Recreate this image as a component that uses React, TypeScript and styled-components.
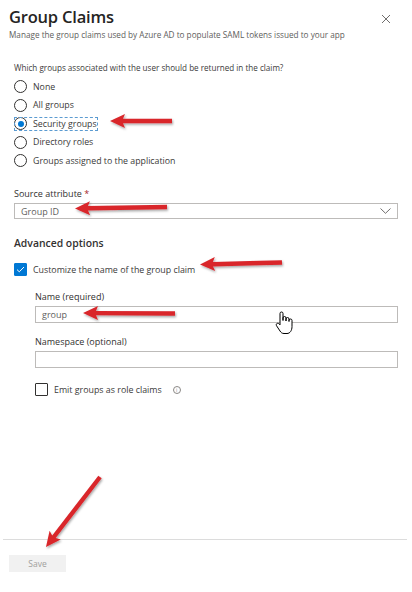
import React from "react";
import styled, { createGlobalStyle } from "styled-components";

const GlobalStyle = createGlobalStyle`
  html, body { margin: 0; padding: 0; background: #fff; }
  body { font-family: "Open Sans", "Noto Sans", sans-serif; color: #323130; }
  * { box-sizing: border-box; }
`;

const Panel = styled.div`
  position: relative;
  width: 412px;
  height: 592px;
  display: flex;
  flex-direction: column;
  background: #fff;
  overflow: hidden;
`;

const Header = styled.header`
  display: flex;
  justify-content: space-between;
  align-items: flex-start;
  padding: 5px 20px 0 9px;
`;

const TitleBlock = styled.div`
  display: flex;
  flex-direction: column;
`;

const Title = styled.h1`
  margin: 0;
  font-size: 16.5px;
  letter-spacing: -0.2px;
  line-height: 24px;
  font-weight: 600;
  color: #252423;
`;

const Subtitle = styled.p`
  margin: 0;
  font-size: 8.2px;
  line-height: 12px;
  color: #605e5c;
`;

const CloseButton = styled.button`
  border: 0;
  background: transparent;
  padding: 0;
  margin-top: 8px;
  width: 12px;
  height: 12px;
  display: flex;
  align-items: center;
  justify-content: center;
`;

const Body = styled.main`
  flex: 1;
  display: flex;
  flex-direction: column;
  padding: 0 14px;
`;

const Question = styled.p`
  margin: 20.5px 0 4px;
  font-size: 8.1px;
  line-height: 12px;
  color: #3b3a39;
`;

const RadioList = styled.div`
  display: flex;
  flex-direction: column;
`;

const RadioRow = styled.label<{ $focused?: boolean }>`
  align-self: flex-start;
  display: flex;
  align-items: center;
  gap: 6px;
  height: 18.5px;
  font-size: 8.8px;
  color: #3b3a39;
  position: relative;
  &::after {
    content: "";
    display: ${(p) => (p.$focused ? "block" : "none")};
    position: absolute;
    left: 0;
    right: -1px;
    top: 2px;
    bottom: 2px;
    border: 1px dashed #5b9bd1;
  }
`;

const RadioCircle = styled.span<{ $checked?: boolean }>`
  width: 13px;
  height: 13px;
  border-radius: 50%;
  border: 1px solid #323130;
  display: flex;
  align-items: center;
  justify-content: center;
  &::before {
    content: "";
    display: ${(p) => (p.$checked ? "block" : "none")};
    width: 6px;
    height: 6px;
    border-radius: 50%;
    background: #0078d4;
  }
`;

const FieldLabel = styled.div<{ $mt: number }>`
  margin-top: ${(p) => p.$mt}px;
  font-size: 9px;
  line-height: 12px;
  color: #323130;
`;

const Required = styled.span`
  color: #a4262c;
`;

const Select = styled.div`
  margin-top: 3px;
  height: 16px;
  border: 1px solid #bdbbb9;
  display: flex;
  align-items: center;
  justify-content: space-between;
  padding: 0 6px;
  font-size: 9px;
  color: #605e5c;
`;

const SectionTitle = styled.h2`
  margin: 16px 0 0;
  font-size: 10.4px;
  line-height: 16px;
  font-weight: 600;
  color: #323130;
`;

const CheckRow = styled.label<{ $mt: number }>`
  display: flex;
  align-items: center;
  gap: 6px;
  margin-top: ${(p) => p.$mt}px;
  font-size: 8.85px;
  color: #3b3a39;
`;

const CheckBox = styled.span<{ $checked?: boolean }>`
  width: 13px;
  height: 13px;
  border-radius: 1px;
  border: 1px solid ${(p) => (p.$checked ? "#0078d4" : "#323130")};
  background: ${(p) => (p.$checked ? "#0078d4" : "#fff")};
  display: flex;
  align-items: center;
  justify-content: center;
`;

const Indented = styled.div`
  display: flex;
  flex-direction: column;
  padding-left: 21px;
`;

const TextInput = styled.div`
  margin-top: 3px;
  height: 17px;
  border: 1px solid #bdbbb9;
  display: flex;
  align-items: center;
  padding: 0 6px;
  font-size: 9px;
  color: #605e5c;
`;

const InfoIcon = styled.span`
  width: 8px;
  height: 8px;
  border-radius: 50%;
  border: 1px solid #8a8886;
  margin-left: 5px;
  font-size: 5px;
  line-height: 6px;
  color: #8a8886;
  display: flex;
  align-items: center;
  justify-content: center;
`;

const Footer = styled.footer`
  display: flex;
  flex-direction: column;
  padding: 0 5px 20px 3px;
`;

const Divider = styled.hr`
  margin: 0;
  border: 0;
  border-top: 1px solid #dcdcdc;
`;

const SaveButton = styled.button`
  margin: 15px 0 0 6px;
  width: 57px;
  height: 17px;
  border: 0;
  background: #f1f1f1;
  color: #a19f9d;
  font-family: inherit;
  font-size: 8.5px;
  padding: 0;
`;

const Overlay = styled.svg`
  position: absolute;
  left: 0;
  top: 0;
  pointer-events: none;
`;

type Arrow = { tx: number; ty: number; bx: number; by: number };

const arrows: Arrow[] = [
  { tx: 110, ty: 121, bx: 172, by: 121 },
  { tx: 75, ty: 208.5, bx: 167, by: 207 },
  { tx: 200, ty: 264.5, bx: 282, by: 262.5 },
  { tx: 83, ty: 313, bx: 175, by: 313.5 },
  { tx: 46, ty: 547, bx: 100, by: 477 },
];

function arrowPoints(a: Arrow) {
  const dx = a.bx - a.tx;
  const dy = a.by - a.ty;
  const len = Math.hypot(dx, dy);
  const ux = dx / len;
  const uy = dy / len;
  const px = -uy;
  const py = ux;
  const head = 15;
  const hw = 7;
  const sw = 2.2;
  const pt = (along: number, side: number) =>
    `${(a.tx + ux * along + px * side).toFixed(1)},${(a.ty + uy * along + py * side).toFixed(1)}`;
  return [
    pt(0, 0),
    pt(head, hw),
    pt(head - 2, sw),
    pt(len, sw),
    pt(len, -sw),
    pt(head - 2, -sw),
    pt(head, -hw),
  ].join(" ");
}

const Close = () => (
  <svg width="10" height="10" viewBox="0 0 10 10">
    <path d="M1 1 L9 9 M9 1 L1 9" stroke="#605e5c" strokeWidth="0.9" fill="none" />
  </svg>
);

const Chevron = () => (
  <svg width="11" height="6" viewBox="0 0 11 6">
    <path d="M0.5 0.5 L5.5 5.3 L10.5 0.5" stroke="#605e5c" strokeWidth="0.9" fill="none" />
  </svg>
);

const Check = () => (
  <svg width="9" height="7" viewBox="0 0 9 7">
    <path d="M1 3.6 L3.3 5.8 L8 1" stroke="#fff" strokeWidth="1" fill="none" />
  </svg>
);

const radios = [
  "None",
  "All groups",
  "Security groups",
  "Directory roles",
  "Groups assigned to the application",
];

export default function App() {
  return (
    <>
      <GlobalStyle />
      <Panel>
        <Header>
          <TitleBlock>
            <Title>Group Claims</Title>
            <Subtitle>
              Manage the group claims used by Azure AD to populate SAML tokens issued to your app
            </Subtitle>
          </TitleBlock>
          <CloseButton aria-label="Close">
            <Close />
          </CloseButton>
        </Header>
        <Body>
          <Question>Which groups associated with the user should be returned in the claim?</Question>
          <RadioList>
            {radios.map((r, i) => (
              <RadioRow key={r} $focused={i === 2}>
                <RadioCircle $checked={i === 2} />
                <span>{r}</span>
              </RadioRow>
            ))}
          </RadioList>
          <FieldLabel $mt={18}>
            Source attribute <Required>*</Required>
          </FieldLabel>
          <Select>
            <span>Group ID</span>
            <Chevron />
          </Select>
          <SectionTitle>Advanced options</SectionTitle>
          <CheckRow $mt={12}>
            <CheckBox $checked>
              <Check />
            </CheckBox>
            <span>Customize the name of the group claim</span>
          </CheckRow>
          <Indented>
            <FieldLabel $mt={15}>Name (required)</FieldLabel>
            <TextInput>group</TextInput>
            <FieldLabel $mt={13}>Namespace (optional)</FieldLabel>
            <TextInput />
            <CheckRow $mt={15}>
              <CheckBox />
              <span>Emit groups as role claims</span>
              <InfoIcon>i</InfoIcon>
            </CheckRow>
          </Indented>
        </Body>
        <Footer>
          <Divider />
          <SaveButton>Save</SaveButton>
        </Footer>
        <Overlay width="412" height="592" viewBox="0 0 412 592">
          <defs>
            <filter id="sh" x="-10%" y="-30%" width="130%" height="170%">
              <feDropShadow dx="1" dy="1.5" stdDeviation="1" floodColor="#000" floodOpacity="0.35" />
            </filter>
          </defs>
          {arrows.map((a, i) => (
            <polygon key={i} points={arrowPoints(a)} fill="#d9262c" filter="url(#sh)" />
          ))}
          <g transform="translate(275.5,311.5)">
            <path
              d="M4.5 13 V2 A1.5 1.5 0 0 1 7.5 2 V9 V6.5 A1.5 1.5 0 0 1 10.5 6.5 V9.5 V7.5 A1.5 1.5 0 0 1 13.5 7.5 V10 V9 A1.5 1.5 0 0 1 16.5 9 V15 C16.5 19 14.5 22 11.5 22 H8.5 C6.5 22 5.5 21 4.5 19.5 L1 14.2 C0.4 13.2 0.9 12 1.9 11.8 C2.8 11.6 3.6 12.1 4.5 13.4 Z"
              fill="#fff"
              stroke="#000"
              strokeWidth="1"
              strokeLinejoin="round"
            />
          </g>
        </Overlay>
      </Panel>
    </>
  );
}
